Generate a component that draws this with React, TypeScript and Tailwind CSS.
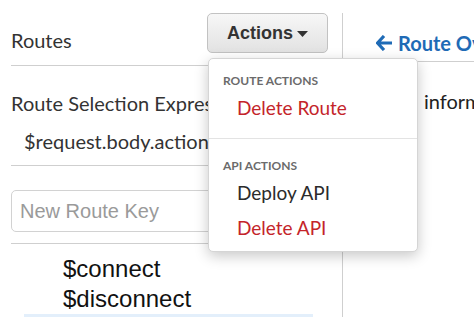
import { useState } from 'react';

type MenuItem = {
  label: string;
  danger?: boolean;
};

type MenuSection = {
  title: string;
  items: MenuItem[];
};

const sections: MenuSection[] = [
  { title: 'ROUTE ACTIONS', items: [{ label: 'Delete Route', danger: true }] },
  { title: 'API ACTIONS', items: [{ label: 'Deploy API' }, { label: 'Delete API', danger: true }] },
];

const routes = ['$connect', '$disconnect'];

function ActionsMenu() {
  return (
    <div className="absolute left-[1px] top-[45px] z-10 w-[210px] rounded-[5px] border border-[#d5d5d5] bg-white pt-[14px] pb-[11px] shadow-[0_4px_14px_rgba(0,0,0,0.22)]">
      {sections.map((section, i) => (
        <div key={section.title} className={i > 0 ? 'border-t border-[#e3e3e3] pt-[19px]' : 'pb-[18px]'}>
          <div className="px-[14px] text-[12px] font-bold leading-[16px] text-[#6b6b6b]">{section.title}</div>
          {section.items.map((item, j) => (
            <div
              key={item.label}
              className={
                'px-[28px] text-[19px] leading-[24px] ' +
                (j === 0 ? 'mt-[7px] ' : 'mt-[11px] ') +
                (item.danger ? 'text-[#c4242a]' : 'text-[#2b2b2b]')
              }
            >
              {item.label}
            </div>
          ))}
        </div>
      ))}
    </div>
  );
}

export default function App() {
  const [routeKey, setRouteKey] = useState('');

  return (
    <div className="flex h-[317px] w-[474px] overflow-hidden bg-white pt-[13px] font-['Lato',sans-serif] text-[#333]">
      {/* 左側: ルート一覧 */}
      <div className="w-[342px] shrink-0 pl-[11px] pr-[14px]">
        <div className="flex h-[53px] items-start justify-between border-b border-[#cfcfcf]">
          <div className="mt-[15px] text-[20px] leading-[24px]">Routes</div>
          <div className="relative">
            <button className="flex h-[40px] w-[121px] items-center justify-center gap-[4px] rounded-[5px] border border-[#c2c2c2] bg-gradient-to-b from-[#f7f7f7] to-[#e2e2e2] font-['Liberation_Sans',Arial,sans-serif] text-[18px] font-bold text-[#333]">
              Actions
              <svg width="11" height="6" viewBox="0 0 11 6" className="mt-[2px]">
                <path d="M0 0h11L5.5 6z" fill="#333" />
              </svg>
            </button>
            <ActionsMenu />
          </div>
        </div>

        <div className="border-b border-[#cfcfcf] pb-[12px]">
          <div className="mt-[25px] whitespace-nowrap text-[20px] leading-[24px]">Route Selection Expression</div>
          <div className="mt-[14px] pl-[13px] whitespace-nowrap text-[20px] leading-[24px]">$request.body.action</div>
        </div>

        <div className="border-b border-[#cfcfcf] pt-[24px] pb-[11px]">
          <input
            value={routeKey}
            onChange={(e) => setRouteKey(e.target.value)}
            placeholder="New Route Key"
            className="h-[42px] w-full rounded-[5px] border border-[#d2d2d2] px-[8px] font-['Liberation_Sans',Arial,sans-serif] text-[20px] text-[#333] outline-none placeholder:text-[#9a9a9a]"
          />
        </div>

        <div className="mt-[10px] pl-[52px] font-['Liberation_Sans',Arial,sans-serif] text-[24px] leading-[30px] text-[#111]">
          {routes.map((r) => (
            <div key={r}>{r}</div>
          ))}
        </div>
        <div className="ml-[13px] h-[12px] w-[289px] bg-[#e3effb]" />
      </div>

      {/* 右側: ルート詳細 */}
      <div className="min-w-0 flex-1 border-l border-[#cfcfcf]">
        <div className="flex h-[49px] items-start overflow-hidden border-b border-[#cfcfcf] pl-[33px] pt-[18px]">
          <div className="flex items-center gap-[5px] whitespace-nowrap text-[20px] font-bold leading-[24px] text-[#1f6bb6]">
            <svg width="17" height="16" viewBox="0 0 17 16">
              <path d="M8 1L1.5 8L8 15M2 8H16" fill="none" stroke="#1f6bb6" strokeWidth="3.2" strokeLinejoin="round" />
            </svg>
            Route Overview
          </div>
        </div>
        <div className="mt-[27px] whitespace-nowrap pl-[81px] text-[20px] leading-[24px] text-[#222]">information</div>
      </div>
    </div>
  );
}
